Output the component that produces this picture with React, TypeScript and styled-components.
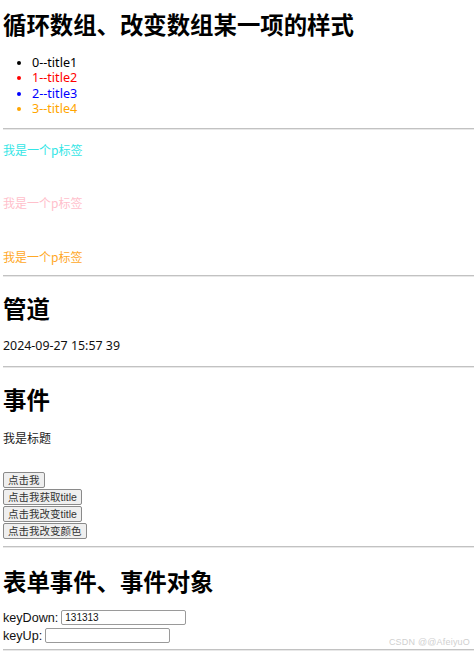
import React, {useState} from 'react';
import styled, {createGlobalStyle} from 'styled-components';

const GlobalStyle = createGlobalStyle`
  html, body {
    margin: 0;
    padding: 0;
    background: #ffffff;
  }

  body {
    font-family: "Noto Sans", "Noto Sans CJK SC", sans-serif;
    color: #1a1a1a;
  }
`;

const Page = styled.div`
  position: relative;
  width: 471px;
  height: 652px;
  padding-left: 3px;
  overflow: hidden;
`;

const Title = styled.h1<{ $top: number }>`
  margin: ${p => p.$top}px 0 0;
  font-family: "Noto Sans CJK SC", sans-serif;
  font-size: 23.4px;
  font-weight: 700;
  line-height: 28px;
  color: #000;
`;

const List = styled.ul`
  margin: 17px 0 0;
  padding-left: 29px;
  font-family: "Noto Sans", "Noto Sans CJK SC", sans-serif;
  font-size: 12.6px;
  line-height: 15.3px;
`;

const Item = styled.li<{ $color: string }>`
  color: ${p => p.$color};
`;

const Divider = styled.hr<{ $top: number }>`
  margin: ${p => p.$top}px 0 0;
  height: 0;
  border: none;
  border-top: 1px solid #c2c2c2;
  border-bottom: 1px solid #e8e8e8;
`;

const Para = styled.p<{ $top: number; $color?: string }>`
  margin: ${p => p.$top}px 0 0;
  font-family: "Noto Sans CJK SC", sans-serif;
  font-size: 12px;
  line-height: 16px;
  color: ${p => p.$color || '#1a1a1a'};
`;

const DateLine = styled.p`
  margin: 16px 0 0;
  font-family: "Noto Sans", "Noto Sans CJK SC", sans-serif;
  font-size: 12.4px;
  line-height: 16px;
  color: #111;
`;

const Buttons = styled.div`
  margin-top: 26px;
  display: flex;
  flex-direction: column;
  align-items: flex-start;
  gap: 1px;
`;

const Button = styled.button`
  height: 16px;
  padding: 0 4px;
  margin: 0;
  font-family: "Liberation Sans", "Noto Sans CJK SC", sans-serif;
  font-size: 10.5px;
  line-height: 14px;
  color: #333;
  background: #efefef;
  border: 1px solid #8a8a8a;
  border-radius: 2px;
`;

const Form = styled.div`
  margin-top: 14px;
  display: flex;
  flex-direction: column;
  gap: 1px;
`;

const Field = styled.label`
  display: flex;
  align-items: center;
  gap: 3px;
  height: 17px;
  font-family: "Liberation Sans", Arial, sans-serif;
  font-size: 12.6px;
  color: #111;
`;

const Input = styled.input`
  box-sizing: border-box;
  width: 125px;
  height: 15px;
  padding: 0 3px;
  font-family: "Liberation Sans", Arial, sans-serif;
  font-size: 10px;
  color: #111;
  border: 1px solid #9a9a9a;
  border-radius: 2px;
  outline: none;
`;

const Watermark = styled.div`
  position: absolute;
  right: 4px;
  bottom: 5px;
  font-family: "Liberation Sans", Arial, sans-serif;
  font-size: 9px;
  color: #d0d0d0;
  letter-spacing: 0.2px;
`;

const titles = [
  {text: '0--title1', color: '#000000'},
  {text: '1--title2', color: '#ff0000'},
  {text: '2--title3', color: '#0000ff'},
  {text: '3--title4', color: '#ffa500'},
];

const paras = [
  {color: '#33e6e6', top: 12},
  {color: '#ffc0cb', top: 37},
  {color: '#ffa827', top: 38},
];

export default function App() {
  const [keyDown, setKeyDown] = useState('131313');
  const [keyUp, setKeyUp] = useState('');
  return (
    <>
      <GlobalStyle/>
      <Page>
        <Title $top={10}>循环数组、改变数组某一项的样式</Title>
        <List>
          {titles.map(t => <Item key={t.text} $color={t.color}>{t.text}</Item>)}
        </List>
        <Divider $top={12}/>
        {paras.map((p, i) => <Para key={i} $top={p.top} $color={p.color}>我是一个p标签</Para>)}
        <Divider $top={10}/>

        <Title $top={17}>管道</Title>
        <DateLine>2024-09-27 15:57 39</DateLine>
        <Divider $top={12}/>

        <Title $top={17}>事件</Title>
        <Para $top={17}>我是标题</Para>
        <Buttons>
          <Button>点击我</Button>
          <Button>点击我获取title</Button>
          <Button>点击我改变title</Button>
          <Button>点击我改变颜色</Button>
        </Buttons>
        <Divider $top={7}/>

        <Title $top={19}>表单事件、事件对象</Title>
        <Form>
          <Field>keyDown: <Input value={keyDown} onChange={e => setKeyDown(e.target.value)}/></Field>
          <Field>keyUp: <Input value={keyUp} onChange={e => setKeyUp(e.target.value)}/></Field>
        </Form>
        <Divider $top={5}/>
        <Watermark>CSDN @@AfeiyuO</Watermark>
      </Page>
    </>
  );
}
